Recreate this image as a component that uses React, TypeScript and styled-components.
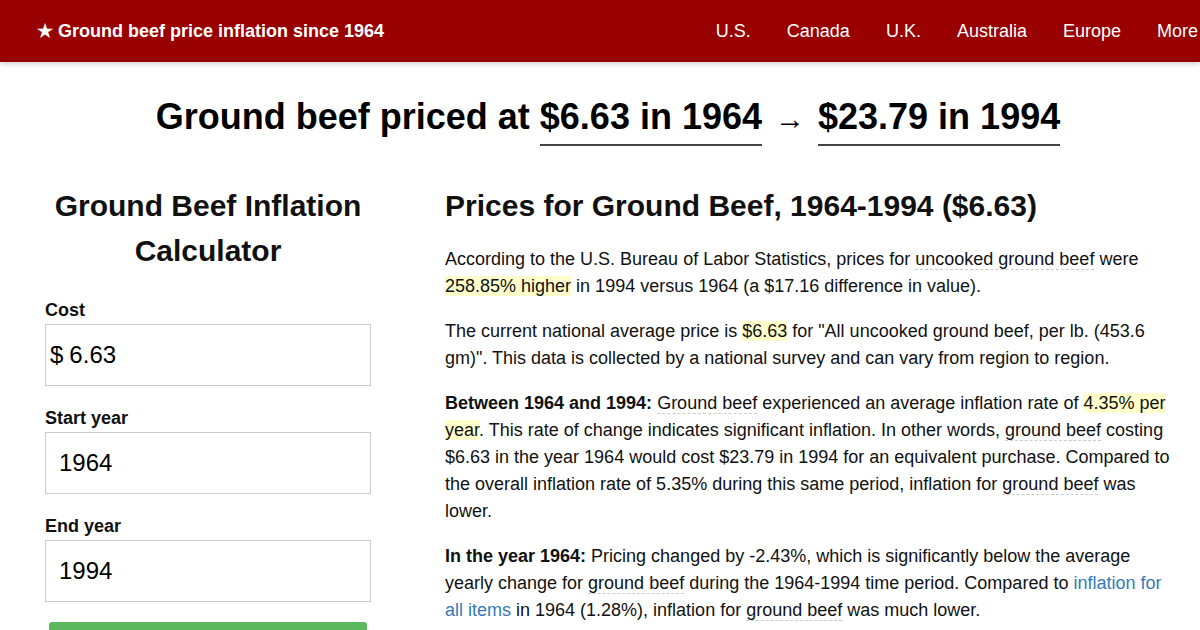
import React from 'react';
import styled, { createGlobalStyle } from 'styled-components';

const GlobalStyle = createGlobalStyle`
  html, body {
    margin: 0;
    padding: 0;
    background: #fff;
    font-family: "Liberation Sans", Arial, sans-serif;
    color: #111;
    overflow: hidden;
  }
`;

const Page = styled.div`
  width: 1200px;
  height: 630px;
  overflow: hidden;
`;

const TopBar = styled.header`
  height: 62px;
  background-color: #990000;
  box-shadow: 0 2px 5px rgba(0, 0, 0, 0.18);
  display: flex;
  align-items: center;
  justify-content: space-between;
  padding-left: 37px;
  position: relative;
  z-index: 2;
`;

const Brand = styled.a`
  color: #fff;
  font-size: 18px;
  font-weight: 700;
  text-decoration: none;
  white-space: nowrap;
`;

const Nav = styled.nav`
  display: flex;
  align-items: center;
  margin-right: -16px;
`;

const NavLink = styled.a`
  color: #fff;
  font-size: 18px;
  text-decoration: none;
  padding: 0 18px;
  white-space: nowrap;
`;

const Headline = styled.h1`
  margin: 34px 0 0;
  padding-left: 16px;
  text-align: center;
  font-size: 36px;
  font-weight: 700;
  line-height: 42px;
  color: #000;
`;

const Figure = styled.span`
  display: inline-block;
  border-bottom: 2px solid #444;
  padding-bottom: 7px;
  line-height: 40px;
`;

const Arrow = styled.span`
  font-size: 30px;
  margin: 0 13px;
  font-weight: 400;
`;

const Columns = styled.div`
  display: flex;
  gap: 74px;
  padding-left: 45px;
  margin-top: 22px;
`;

const Calculator = styled.form`
  width: 326px;
  flex-shrink: 0;
`;

const CalcTitle = styled.h2`
  margin: 15px 0 25px;
  text-align: center;
  font-size: 30px;
  font-weight: 700;
  line-height: 45px;
`;

const Field = styled.div`
  margin-bottom: 20px;

  &:last-of-type {
    margin-bottom: 0;
  }
`;

const Label = styled.label`
  display: block;
  font-size: 18px;
  font-weight: 700;
  line-height: 24px;
  margin-bottom: 2px;
`;

const InputBox = styled.div<{ $pad: number }>`
  height: 62px;
  box-sizing: border-box;
  border: 1px solid #ccc;
  display: flex;
  align-items: center;
  padding-left: ${p => p.$pad}px;
  font-size: 24px;
  color: #000;
`;

const Prefix = styled.span`
  margin-right: 6px;
`;

const SubmitButton = styled.div`
  margin: 18px 4px 0;
  height: 40px;
  background: #5cb85c;
  border-radius: 3px;
`;

const Article = styled.section`
  width: 725px;
`;

const ArticleTitle = styled.h2`
  margin: 15px 0 18px;
  font-size: 30px;
  font-weight: 700;
  line-height: 45px;
`;

const Para = styled.p`
  margin: 0 0 18px;
  font-size: 18px;
  line-height: 27px;
  color: #111;
`;

const Term = styled.span`
  border-bottom: 1px dashed #ccc;
`;

const Mark = styled.span`
  background: #ffffcc;
`;

const TextLink = styled.a`
  color: #337ab7;
  text-decoration: none;
`;

export default function App() {
  const nav = ['U.S.', 'Canada', 'U.K.', 'Australia', 'Europe', 'More'];
  return (
    <Page>
      <GlobalStyle />
      <TopBar>
        <Brand href="#">★ Ground beef price inflation since 1964</Brand>
        <Nav>
          {nav.map(n => (
            <NavLink key={n} href="#">{n}</NavLink>
          ))}
        </Nav>
      </TopBar>

      <Headline>
        Ground beef priced at <Figure>$6.63 in 1964</Figure>
        <Arrow>→</Arrow>
        <Figure>$23.79 in 1994</Figure>
      </Headline>

      <Columns>
        <Calculator>
          <CalcTitle>Ground Beef Inflation Calculator</CalcTitle>
          <Field>
            <Label>Cost</Label>
            <InputBox $pad={4}>
              <Prefix>$</Prefix>6.63
            </InputBox>
          </Field>
          <Field>
            <Label>Start year</Label>
            <InputBox $pad={13}>1964</InputBox>
          </Field>
          <Field>
            <Label>End year</Label>
            <InputBox $pad={13}>1994</InputBox>
          </Field>
          <SubmitButton />
        </Calculator>

        <Article>
          <ArticleTitle>Prices for Ground Beef, 1964-1994 ($6.63)</ArticleTitle>
          <Para>
            According to the U.S. Bureau of Labor Statistics, prices for <Term>uncooked ground beef</Term> were{' '}
            <Mark>258.85% higher</Mark> in 1994 versus 1964 (a $17.16 difference in value).
          </Para>
          <Para>
            The current national average price is <Mark>$6.63</Mark> for "All uncooked ground beef, per lb. (453.6
            gm)". This data is collected by a national survey and can vary from region to region.
          </Para>
          <Para>
            <strong>Between 1964 and 1994:</strong> <Term>Ground beef</Term> experienced an average inflation rate of{' '}
            <Mark>4.35% per year</Mark>. This rate of change indicates significant inflation. In other words,{' '}
            <Term>ground beef</Term> costing $6.63 in the year 1964 would cost $23.79 in 1994 for an equivalent
            purchase. Compared to the overall inflation rate of 5.35% during this same period, inflation for{' '}
            <Term>ground beef</Term> was lower.
          </Para>
          <Para>
            <strong>In the year 1964:</strong> Pricing changed by -2.43%, which is significantly below the average
            yearly change for <Term>ground beef</Term> during the 1964-1994 time period. Compared to{' '}
            <TextLink href="#">inflation for all items</TextLink> in 1964 (1.28%), inflation for{' '}
            <Term>ground beef</Term> was much lower.
          </Para>
        </Article>
      </Columns>
    </Page>
  );
}
